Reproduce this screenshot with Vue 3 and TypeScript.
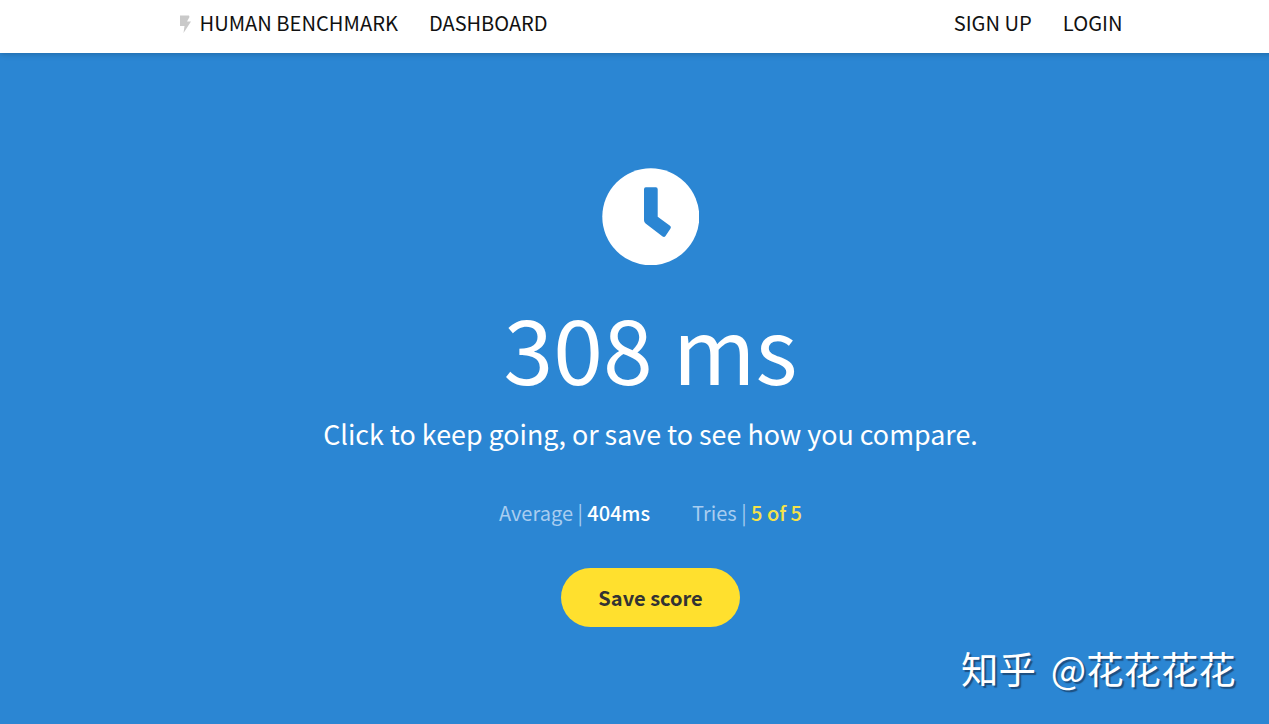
<script setup lang="ts">
const cjk = "知乎";
const handle = "@花花花花";
</script>

<template>
  <div class="viewport">
    <div class="page">
      <header class="topbar">
        <nav class="nav">
          <div class="nav-group">
            <a class="nav-link brand">
              <svg class="bolt" viewBox="0 0 12 20" width="12" height="20" aria-hidden="true">
                <path d="M1 2.5H10L10.5 4 8 8.5H12L4.5 20 5.5 13H1Z" fill="#c9c9c9" />
              </svg>
              HUMAN BENCHMARK
            </a>
            <a class="nav-link dash">DASHBOARD</a>
          </div>
          <div class="nav-group">
            <a class="nav-link">SIGN UP</a>
            <a class="nav-link">LOGIN</a>
          </div>
        </nav>
      </header>

      <main class="stage">
        <svg class="clock" viewBox="-0.3 -0.3 97 97" width="97" height="97" aria-hidden="true">
          <circle cx="48.5" cy="48.5" r="48.5" fill="#fff" />
          <path d="M43.5 19H53.5Q55.4 19 55.4 21V48.4L67.7 57.4Q69.3 58.6 68.2 60.2L63.2 67.6Q62 69.3 60.3 68.1L43.3 55.2Q41.7 54 41.7 52V21Q41.7 19 43.5 19Z" fill="#2b86d3" />
        </svg>
        <h1 class="result">308 ms</h1>
        <p class="hint">Click to keep going, or save to see how you compare.</p>
        <div class="stats">
          <span class="stat">Average <i class="bar">|</i> <b class="avg">404ms</b></span>
          <span class="stat">Tries <i class="bar">|</i> <b class="tries">5 of 5</b></span>
        </div>
        <button class="save" type="button">Save score</button>
        <div class="mark"><span>{{ cjk }}</span><span>{{ handle }}</span></div>
      </main>
    </div>
  </div>
</template>

<style>
html, body { margin: 0; overflow: hidden; }
</style>

<style scoped>
.viewport {
  width: 1269px;
  height: 724px;
  overflow: hidden;
  background: #2b86d3;
}
.page {
  width: 1301px;
  height: 724px;
  display: flex;
  flex-direction: column;
  font-family: "Noto Sans CJK SC", "Noto Sans", sans-serif;
  position: relative;
}
.topbar {
  height: 53px;
  flex: none;
  background: #fff;
  box-shadow: 0 1px 6px rgba(0, 0, 0, 0.22);
  position: relative;
  z-index: 1;
}
.nav {
  width: 944px;
  height: 46px;
  margin: 0 auto;
  display: flex;
  justify-content: space-between;
  align-items: center;
}
.nav-group {
  display: flex;
  gap: 31px;
  align-items: center;
}
.nav-link {
  font-size: 20.15px;
  line-height: 24px;
  color: #111;
  white-space: nowrap;
}
.dash { font-size: 20px; }
.brand {
  display: flex;
  align-items: center;
  gap: 9px;
}
.bolt { flex: none; }
.stage {
  flex: 1;
  display: flex;
  flex-direction: column;
  align-items: center;
  padding-top: 115px;
  position: relative;
}
.clock { flex: none; display: block; }
.result {
  margin: 26px 0 0;
  font-size: 89.5px;
  line-height: 110px;
  font-weight: 400;
  color: #fff;
  white-space: nowrap;
}
.hint {
  margin: 12px 0 0;
  font-size: 26.85px;
  line-height: 42px;
  color: #fff;
  white-space: nowrap;
}
.stats {
  margin-top: 42px;
  display: flex;
  gap: 42px;
  font-size: 20px;
  line-height: 32px;
  color: #a8cdf0;
  white-space: nowrap;
}
.bar { font-style: normal; }
.avg { font-weight: 500; color: #fff; }
.tries { font-weight: 500; color: #f5e24a; }
.save {
  margin-top: 39px;
  width: 179px;
  height: 59px;
  border: 0;
  border-radius: 30px;
  background: #ffe02e;
  color: #333;
  font-family: inherit;
  font-size: 20px;
  font-weight: 700;
  padding: 0;
}
.mark {
  position: absolute;
  left: 961px;
  top: 590px;
  display: flex;
  gap: 15px;
  font-size: 37.4px;
  line-height: 50px;
  color: #fff;
  white-space: nowrap;
  text-shadow: 2px 2px 1px #1d4f80;
}
</style>
